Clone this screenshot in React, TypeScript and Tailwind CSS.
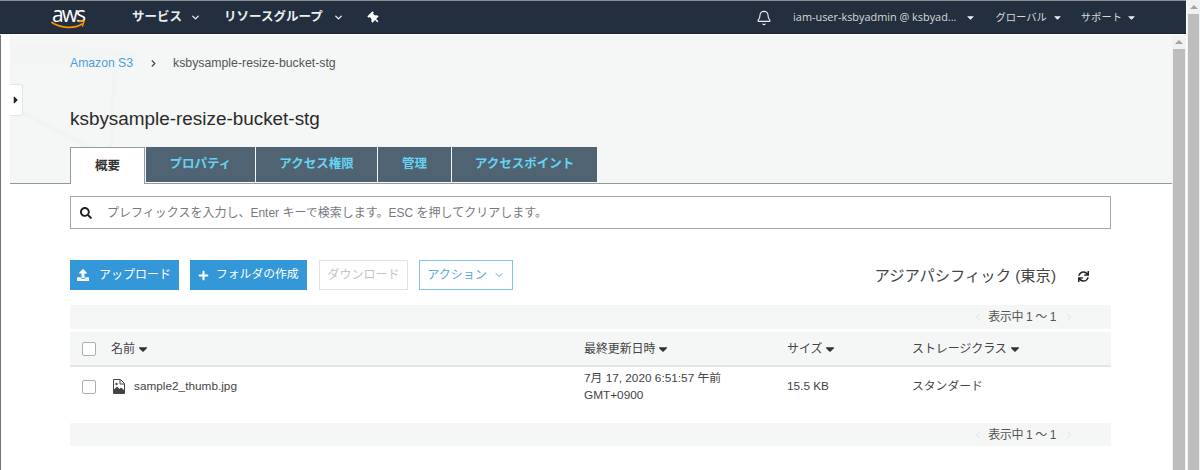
import { Bell, ChevronDown, ChevronLeft, ChevronRight } from 'lucide-react';
import { FaCaretDown, FaCaretRight, FaPlus, FaSearch, FaSync, FaThumbtack, FaUpload } from 'react-icons/fa';

const tabs = [
  { label: 'プロパティ', w: 'w-[109px]' },
  { label: 'アクセス権限', w: 'w-[121px]' },
  { label: '管理', w: 'w-[73px]' },
  { label: 'アクセスポイント', w: 'w-[145px]' },
];

function Scrollbar({ className }: { className: string }) {
  return (
    <div className={`w-[14px] shrink-0 flex flex-col bg-[#f1f1f1] ${className}`}>
      <div className="h-[14px] flex items-center justify-center">
        <div className="w-0 h-0 border-l-[4px] border-r-[4px] border-b-[4px] border-l-transparent border-r-transparent border-b-[#a3a3a3]" />
      </div>
      <div className="flex-1 mx-px bg-[#bdbdbd]" />
    </div>
  );
}

function Pager() {
  return (
    <div className="flex items-center justify-end pr-[36px] text-[12px] tracking-[-0.4px] text-[#555] bg-[#f5f6f6]">
      <ChevronLeft className="w-3 h-3 text-[#e2e4e4]" />
      <span className="ml-[4px]">表示中 1 〜 1</span>
      <ChevronRight className="w-3 h-3 ml-[7px] text-[#e2e4e4]" />
    </div>
  );
}

function SortHead({ label }: { label: string }) {
  return (
    <div className="flex items-center gap-[1px] text-[12px] tracking-[-0.1px] text-[#444]">
      {label}
      <FaCaretDown className="w-[14px] h-[14px] text-[#333]" />
    </div>
  );
}

function Checkbox() {
  return <div className="w-[14px] h-[14px] bg-white border border-[#aab0b0] rounded-[2px]" />;
}

function FileImageIcon() {
  return (
    <svg width="12" height="15" viewBox="0 0 12 15" className="shrink-0">
      <path d="M1 .5h6.500L11.500 4.500V14.500H.5V.5z" fill="#fff" stroke="#444" />
      <path d="M7 1v4h4" fill="none" stroke="#444" />
      <path d="M1 10.500l3-3 2.500 2.500 1.500-1.500 3 2.500v3H1z" fill="#444" />
      <circle cx="3.500" cy="5" r="1.200" fill="#444" />
    </svg>
  );
}

export default function App() {
  return (
    <div
      className="w-[1200px] h-[470px] flex overflow-hidden bg-white text-[#444]"
      style={{ fontFamily: '"Liberation Sans", "Noto Sans CJK JP", sans-serif' }}
    >
      <div className="flex-1 min-w-0 flex flex-col">
        <div className="h-px bg-[#8a8f94] shrink-0" />
        {/* top nav */}
        <div className="h-[33px] shrink-0 bg-[#232f3e] border-b border-[#1a2430] flex items-center pt-px text-[12.5px] text-[#eceff1]">
          <div className="w-[132px] pl-[52px] shrink-0 relative h-full">
            <div className="text-[21px] leading-[22px] pt-[1px] tracking-[-2px] text-white" style={{ fontFamily: '"Open Sans", sans-serif' }}>aws</div>
            <svg className="absolute left-[51px] top-[18px]" width="35" height="10" viewBox="0 0 35 10" fill="none">
              <path d="M1 2.500c9 6 22 6.500 30 1.500" stroke="#f79400" strokeWidth="1.700" strokeLinecap="round" />
              <path d="M28 1.500l5-.5-1.500 5" stroke="#f79400" strokeWidth="1.500" strokeLinecap="round" strokeLinejoin="round" />
            </svg>
          </div>
          <span className="font-bold">サービス</span>
          <ChevronDown className="w-[11px] h-[11px] ml-[8px]" strokeWidth={3} />
          <span className="font-bold ml-[23px]">リソースグループ</span>
          <ChevronDown className="w-[11px] h-[11px] ml-[10px]" strokeWidth={3} />
          <FaThumbtack className="w-[12px] h-[12px] ml-[24px] text-white -rotate-45" />
          <Bell className="w-[16px] h-[16px] ml-auto" strokeWidth={1.700} />
          <span className="ml-[21px] text-[10.900px] text-[#d5dbdb]" style={{ fontFamily: '"Open Sans", sans-serif' }}>iam-user-ksbyadmin @ ksbyad...</span>
          <FaCaretDown className="w-[11px] h-[11px] ml-[9px]" />
          <span className="ml-[19px] text-[10.300px] text-[#d5dbdb]">グローバル</span>
          <FaCaretDown className="w-[11px] h-[11px] ml-[5px]" />
          <span className="ml-[18px] text-[10.300px] text-[#d5dbdb]">サポート</span>
          <FaCaretDown className="w-[11px] h-[11px] ml-[4px] mr-[49px]" />
        </div>

        <div className="flex-1 min-h-0 flex relative border-t border-white">
          <div className="w-[10px] shrink-0 bg-white border-l border-[#777]" />
          <div className="flex-1 min-w-0 flex flex-col">
            {/* grey header zone */}
            <div className="h-[149px] shrink-0 bg-[#f5f6f6] border-b border-[#8f9aa3] relative pl-[60px]">
              {/* faint watermark behind the header */}
              <svg className="absolute left-0 top-0" width="340" height="148" viewBox="0 0 340 148" fill="none" stroke="#f2f3f3" strokeWidth="4">
                <ellipse cx="40" cy="20" rx="85" ry="9" fill="#f3f4f4" stroke="none" />
                <path d="M10 76l84 44q12 6 16 20" strokeLinecap="round" />
                <path d="M105 30l-6 110" />
              </svg>
              <div className="relative pt-[19px] flex items-center leading-[18px]">
                <span className="text-[12.200px] text-[#4a9fdb]">Amazon S3</span>
                <ChevronRight className="w-[11px] h-[11px] ml-[15px] text-[#444]" strokeWidth={2.500} />
                <span className="ml-[14px] text-[12.300px] text-[#555]">ksbysample-resize-bucket-stg</span>
              </div>
              <h1 className="relative mt-[35px] text-[18.900px] leading-[24px] text-[#2b2b2b]">ksbysample-resize-bucket-stg</h1>
              <div className="relative mt-[16px] flex h-[37px] text-[12.500px] font-bold">
                <div className="w-[75px] h-[37px] bg-white border border-b-0 border-[#8f9aa3] flex items-center justify-center text-[#333]">概要</div>
                {tabs.map(t => (
                  <div key={t.label} className={`${t.w} h-[35px] ml-px bg-[#4f6373] flex items-center justify-center text-[#66d3f2]`}>
                    {t.label}
                  </div>
                ))}
              </div>
            </div>

            {/* body */}
            <div className="flex-1 min-h-0 pl-[60px] pr-[61px] pt-[12px]">
              <div className="h-[33px] border border-[#a6a6a6] flex items-center pl-[9px] text-[12px] text-[#77797c]">
                <FaSearch className="w-[12px] h-[12px] text-[#222]" />
                <span className="ml-[15px]">プレフィックスを入力し、Enter キーで検索します。ESC を押してクリアします。</span>
              </div>

              <div className="mt-[31px] h-[30px] flex items-center text-[12px] whitespace-nowrap">
                <div className="w-[109px] h-[30px] bg-[#3498d8] text-white flex items-center pl-[7px]">
                  <FaUpload className="w-[12px] h-[12px]" />
                  <span className="ml-[10px]">アップロード</span>
                </div>
                <div className="w-[117px] h-[30px] ml-[11px] bg-[#3498d8] text-white flex items-center pl-[8px]">
                  <FaPlus className="w-[11px] h-[11px]" />
                  <span className="ml-[7px] text-[11.800px]">フォルダの作成</span>
                </div>
                <div className="w-[89px] h-[30px] ml-[12px] border border-[#e2e2e2] text-[#c4c4c4] flex items-center justify-center">ダウンロード</div>
                <div className="w-[94px] h-[30px] ml-[11px] border border-[#85c0e8] text-[#5aa8e0] flex items-center justify-center">
                  アクション
                  <ChevronDown className="w-3 h-3 ml-[6px]" />
                </div>
                <span className="ml-auto pt-[2px] text-[15.300px] text-[#444]">アジアパシフィック (東京)</span>
                <FaSync className="w-[11px] h-[11px] mt-[2px] ml-[22px] mr-[22px] text-[#222]" />
              </div>

              <div className="mt-[15px] h-[24px] grid"><Pager /></div>

              <div className="mt-[3px] h-[35px] bg-[#f5f6f6] border-b-2 border-[#e4e6e6] grid grid-cols-[41px_473px_203px_125px_1fr] items-center">
                <div className="pl-[12px]"><Checkbox /></div>
                <SortHead label="名前" />
                <SortHead label="最終更新日時" />
                <SortHead label="サイズ" />
                <SortHead label="ストレージクラス" />
              </div>

              <div className="h-[39px] grid grid-cols-[41px_473px_203px_125px_1fr] items-center text-[11.800px] text-[#444]">
                <div className="pl-[12px]"><Checkbox /></div>
                <div className="flex items-center pl-[2px]">
                  <FileImageIcon />
                  <span className="ml-[9px]">sample2_thumb.jpg</span>
                </div>
                <div className="leading-[17px]">7月 17, 2020 6:51:57 午前<br />GMT+0900</div>
                <div>15.5 KB</div>
                <div>スタンダード</div>
              </div>

              <div className="mt-[17px] h-[23px] grid"><Pager /></div>
            </div>
          </div>
          <Scrollbar className="" />
          {/* collapsed side nav toggle */}
          <div className="absolute left-[10px] top-[49px] w-[13px] h-[32px] bg-white border border-l-0 border-[#e3e5e5] rounded-r-[3px] flex items-center justify-center">
            <FaCaretRight className="w-[12px] h-[12px] text-[#222]" />
          </div>
        </div>
      </div>
      <Scrollbar className="border-l border-white" />
    </div>
  );
}
